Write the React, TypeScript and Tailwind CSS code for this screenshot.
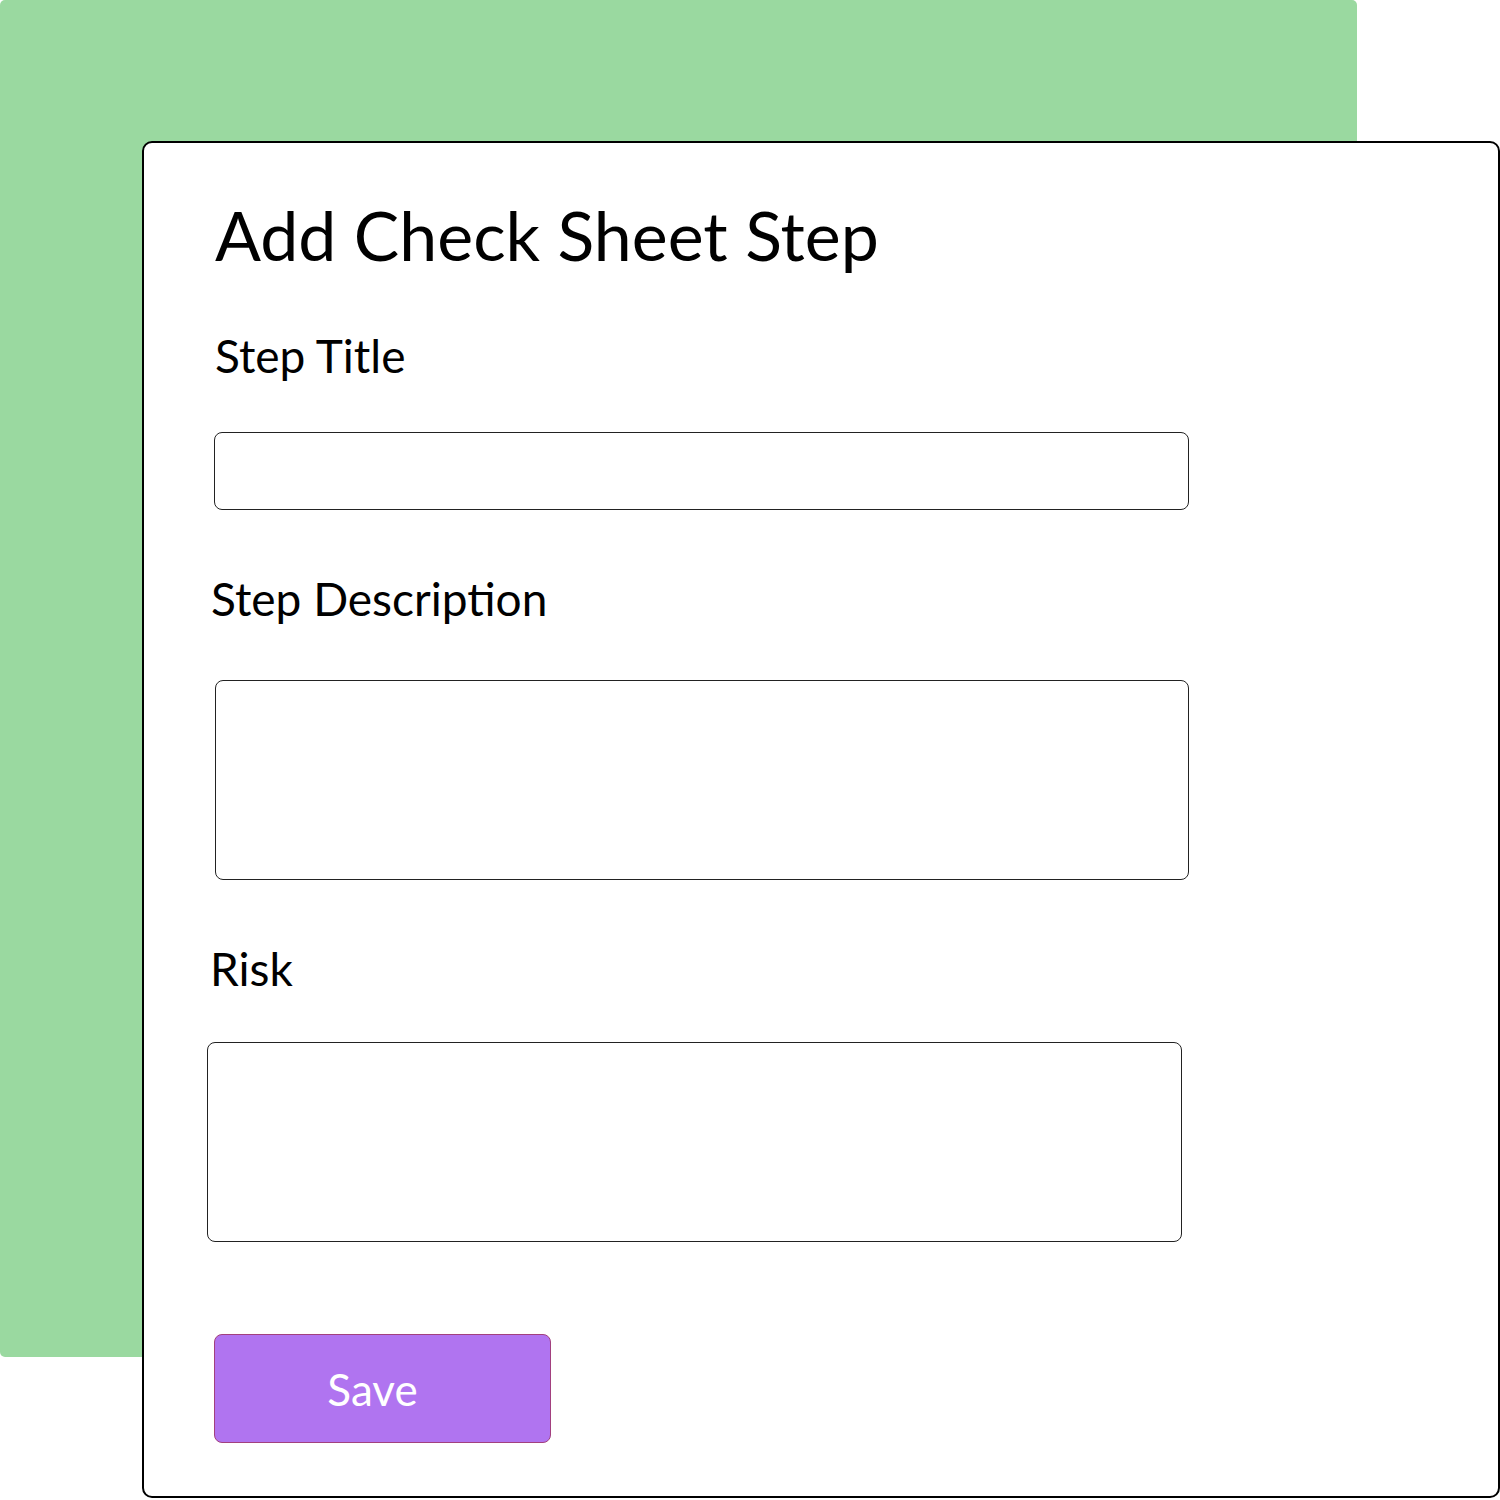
export default function App() {
  return (
    <div className="relative h-[1500px] w-[1500px] overflow-hidden bg-white pl-[142px] pt-[141px] font-['Lato',sans-serif] text-black">
      {/* green backdrop panel */}
      <div className="absolute left-0 top-0 h-[1357px] w-[1357px] rounded-[5px] bg-[#9ad9a0]" />

      <div className="relative flex h-[1357px] w-[1358px] flex-col items-start rounded-[10px] border-2 border-black bg-white">
        <h1 className="ml-[71px] mt-[58px] text-[68px] leading-none font-normal">Add Check Sheet Step</h1>

        <label className="ml-[71px] mt-[64px] text-[46px] leading-none">Step Title</label>
        <input
          type="text"
          className="ml-[70px] mt-[53px] h-[78px] w-[975px] rounded-lg border border-[#222] px-4 text-3xl outline-none"
        />

        <label className="ml-[67px] mt-[66px] text-[46px] leading-none">Step Description</label>
        <textarea className="ml-[71px] mt-[58px] h-[200px] w-[974px] resize-none rounded-lg border border-[#222] p-4 text-3xl outline-none" />

        <label className="ml-[66px] mt-[66px] text-[46px] leading-none">Risk</label>
        <textarea className="ml-[63px] mt-[50px] h-[200px] w-[975px] resize-none rounded-lg border border-[#222] p-4 text-3xl outline-none" />

        <button className="ml-[70px] mt-[92px] flex h-[109px] w-[337px] items-center justify-center rounded-lg border border-[#a2407e] bg-[#b074f0] pr-5 text-[44px] leading-none text-white">
          Save
        </button>
      </div>
    </div>
  );
}
